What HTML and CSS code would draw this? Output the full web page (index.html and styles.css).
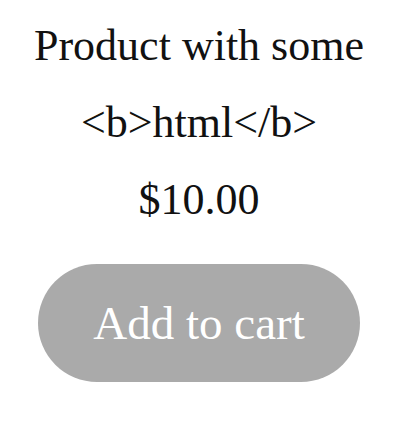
FILE: index.html
```html
<!DOCTYPE html>
<html lang="en">
<head>
    <meta charset="UTF-8">
    <meta name="viewport" content="width=device-width, initial-scale=1.0">
    <title>Product</title>
    <link rel="stylesheet" href="styles.css">
</head>
<body>
    <div class="product">
        <p class="product-title">Product with some &lt;b&gt;html&lt;/b&gt;</p>
        <p class="product-price">$10.00</p>
        <button class="add-btn">Add to cart</button>
    </div>
</body>
</html>
```

FILE: styles.css
```css
body {
    margin: 0;
    font-family: "Liberation Serif", "DejaVu Serif", serif;
    color: #111;
}
.product {
    width: 398px;
    display: flex;
    flex-direction: column;
    align-items: center;
    text-align: center;
    padding-top: 7px;
}
.product-title,
.product-price {
    margin: 0;
    font-size: 44px;
    line-height: 77px;
}
.product-title {
    width: 390px;
}
.add-btn {
    margin-top: 26px;
    width: 322px;
    height: 118px;
    border: none;
    border-radius: 59px;
    background-color: #aaaaaa;
    color: white;
    font-family: inherit;
    font-size: 47px;
    cursor: pointer;
}
```
